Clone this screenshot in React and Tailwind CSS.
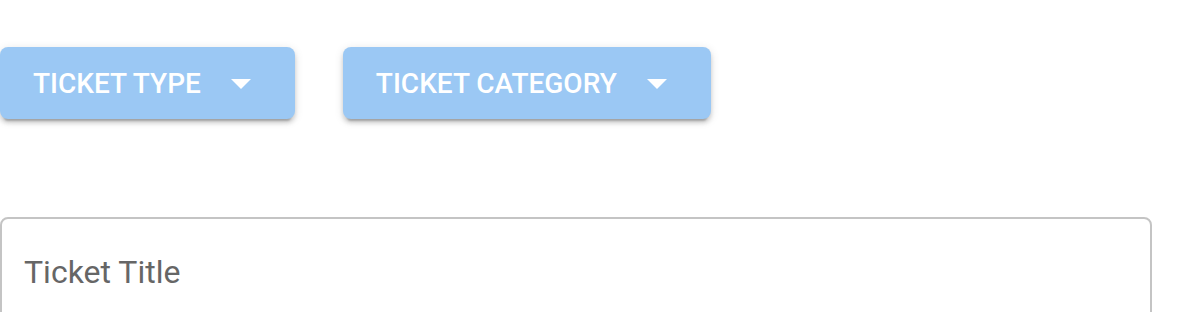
const ArrowDrop = () => (
  <svg viewBox="0 0 24 24" className="w-[48px] h-[48px] ml-[16px] fill-white">
    <path d="M7 10l5 5 5-5z" />
  </svg>
);

const DropButton = ({ label }) => (
  <button className="flex items-center h-[72px] pl-[33px] pr-[30px] rounded-[8px] bg-[#9bc8f4] text-white text-[28px] font-medium uppercase tracking-normal leading-[49px] shadow-[0px_6px_2px_-4px_rgba(0,0,0,0.2),0px_4px_4px_0px_rgba(0,0,0,0.14),0px_2px_10px_0px_rgba(0,0,0,0.12)]">
    <span>{label}</span>
    <ArrowDrop />
  </button>
);

export default function App() {
  return (
    <div className="w-[1196px] h-[312px] overflow-hidden bg-white pt-[47px] font-['Roboto','Liberation_Sans',sans-serif]">
      <div className="flex gap-[48px]">
        <DropButton label="Ticket Type" />
        <DropButton label="Ticket Category" />
      </div>
      <div className="mt-[98px] w-[1152px] h-[112px] border-2 border-[#c4c4c4] rounded-[8px] pl-[22px] pt-[30px]">
        <span className="block text-[32px] leading-[46px] text-[#666666]">Ticket Title</span>
      </div>
    </div>
  );
}
